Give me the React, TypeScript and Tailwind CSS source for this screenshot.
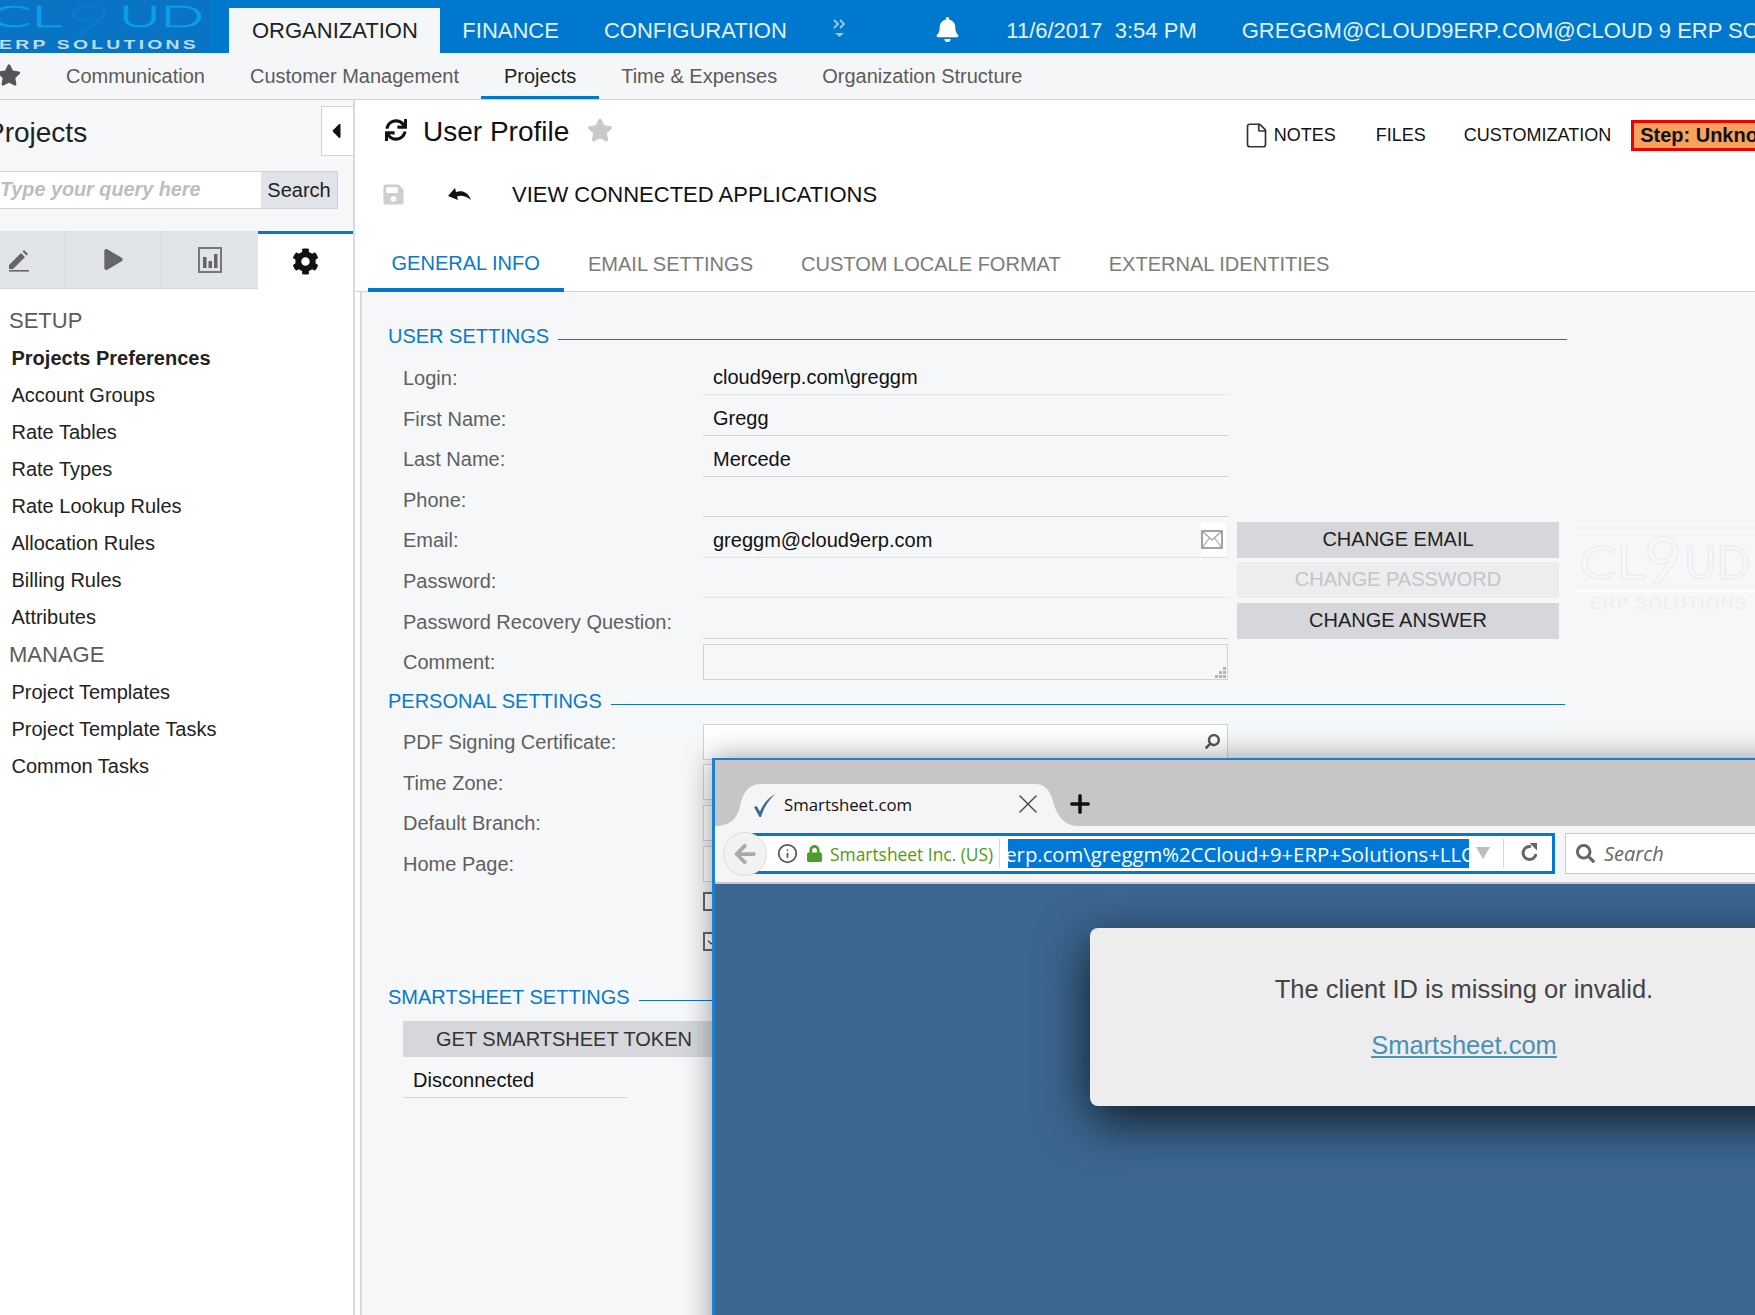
import React from 'react';
import { Check, File, Info, Plus, X } from 'lucide-react';
import { FaArrowLeft, FaBell, FaCaretLeft, FaCog, FaLock, FaPlay, FaSave, FaSearch, FaStar, FaSync } from 'react-icons/fa';

const setupItems = ['Account Groups', 'Rate Tables', 'Rate Types', 'Rate Lookup Rules', 'Allocation Rules', 'Billing Rules', 'Attributes'];
const manageItems = ['Project Templates', 'Project Template Tasks', 'Common Tasks'];

function Logo() {
  return (
    <svg width="229" height="53" className="shrink-0">
      <rect width="210" height="53" fill="#0a74c4" />
      <text x="-10" y="27" fontSize="30" fontWeight="300" fill="#08a0ea" stroke="#08a0ea" strokeWidth="0.6" textLength="72" lengthAdjust="spacingAndGlyphs" fontFamily="Lato">CL</text>
      <text x="66" y="34" fontSize="42" fontWeight="300" fill="#0a7ccf" textLength="46" lengthAdjust="spacingAndGlyphs" fontFamily="Lato">9</text>
      <text x="119" y="27" fontSize="30" fontWeight="300" fill="#08a0ea" stroke="#08a0ea" strokeWidth="0.6" textLength="85" lengthAdjust="spacingAndGlyphs" fontFamily="Lato">UD</text>
      <text x="-1" y="49" fontSize="12" fontWeight="700" letterSpacing="2" fill="#b9dcf2" textLength="200" lengthAdjust="spacingAndGlyphs" fontFamily="Liberation Sans">ERP SOLUTIONS</text>
    </svg>
  );
}

function Watermark() {
  return (
    <svg width="180" height="84" className="absolute left-[1214px] top-[235px]">
      <rect x="0" y="0" width="180" height="2" fill="#f0f2f4" />
      <text x="3" y="52" fontSize="46" fill="none" stroke="#e9ebed" strokeWidth="1" textLength="66" lengthAdjust="spacingAndGlyphs" fontFamily="Lato">CL</text>
      <text x="68" y="56" fontSize="64" fill="none" stroke="#e9ebed" strokeWidth="1" textLength="38" lengthAdjust="spacingAndGlyphs" fontFamily="Lato">9</text>
      <text x="108" y="52" fontSize="46" fill="none" stroke="#e9ebed" strokeWidth="1" textLength="66" lengthAdjust="spacingAndGlyphs" fontFamily="Lato">UD</text>
      <rect x="0" y="63" width="180" height="2" fill="#ffffff" />
      <text x="14" y="82" fontSize="17" fill="#eceef0" textLength="156" lengthAdjust="spacing" fontFamily="Liberation Sans">ERP SOLUTIONS</text>
    </svg>
  );
}

function SectionHead({ title, width, className }: { title: string; width: string; className: string }) {
  return (
    <div className={`flex items-center gap-[9px] h-[24px] ${width} ${className}`}>
      <span className="text-[20px] text-[#0a78cc] whitespace-nowrap">{title}</span>
      <div className="flex-1 h-px bg-[#1272bd] mt-[7px]"></div>
    </div>
  );
}

function Row({ label, field, button }: { label: string; field: React.ReactNode; button?: React.ReactNode }) {
  return (
    <div className="grid grid-cols-[300px_525px_331px] gap-x-0 h-[40.6px] items-center pl-[15px]">
      <span className="pt-[1px] text-[20px] text-[#5f5f5f] whitespace-nowrap">{label}</span>
      {field}
      {button}
    </div>
  );
}

function Line({ value, solid, children }: { value?: string; solid?: boolean; children?: React.ReactNode }) {
  return (
    <div className={`h-[36px] flex items-center justify-between pl-[10px] pr-[2px] text-[20px] text-[#111] border-b ${solid ? 'border-[#d2d3d5]' : 'border-dotted border-[#cfd0d2]'}`}>
      <span className="pt-[1px]">{value}</span>
      {children}
    </div>
  );
}

function FormButton({ label, disabled }: { label: string; disabled?: boolean }) {
  return (
    <div className={`ml-[9px] h-[36px] pb-[2px] flex items-center justify-center text-[20px] ${disabled ? 'bg-[#ecedef] text-[#c4c5c7]' : 'bg-[#d5d7da] text-[#222]'}`}>
      {label}
    </div>
  );
}

function BrowserWindow() {
  return (
    <div className="absolute left-[712px] top-[758px] w-[1100px] h-[600px] flex flex-col border-l-[3px] border-t-2 border-[#1c7fd6] shadow-[0_0_28px_rgba(0,0,0,0.4)] font-['Open_Sans',sans-serif]">
      <div className="h-[66px] bg-[#c6c6c6] flex items-end">
        <div className="relative w-[363px] h-[42px] flex items-center pl-[38px]">
          <svg width="363" height="42" className="absolute left-0 top-0">
            <path d="M0 42 C14 42 22 36 25 22 C28 8 34 0 46 0 L320 0 C330 0 334 6 337 14 C340 26 346 42 363 42 Z" fill="#f5f5f5" />
          </svg>
          <svg width="24" height="24" viewBox="0 0 24 24" className="relative">
            <path d="M1 14 L3.5 13 L7 18.5 C10 11 15 5 22 1 C15 8 10.5 15 8 24 L6.5 24 Z" fill="#3b6a95" />
          </svg>
          <span className="relative ml-[7px] text-[16.8px] text-[#111]">Smartsheet.com</span>
          <X size={32} strokeWidth={1} className="absolute left-[297px] top-[4px] text-[#444]" />
        </div>
        <Plus size={28} strokeWidth={3} className="-ml-[12px] mb-[8px] text-[#111]" />
      </div>
      <div className="relative h-[58px] bg-[#f5f5f5] border-b-2 border-[#c8c8c8] flex items-center pl-[30px] pb-[2px]">
        <div className="w-[810px] h-[41px] shrink-0 bg-white border-y-[3px] border-r-[3px] border-[#0078d7] flex items-center pl-[32px]">
          <Info size={21} strokeWidth={2} className="text-[#555] shrink-0" />
          <FaLock size={17} className="ml-[8px] text-[#4a9f28] shrink-0" />
          <span className="ml-[7px] pt-[2px] text-[17.4px] text-[#4f9a0f] whitespace-nowrap">Smartsheet Inc. (US)</span>
          <div className="ml-[6px] w-px h-[29px] bg-[#d8d8d8] shrink-0"></div>
          <div className="ml-[8px] w-[461px] h-[29px] shrink-0 bg-[#0078d7] overflow-hidden flex items-center">
            <span className="-ml-[3px] pt-[2px] text-[20.3px] text-white whitespace-nowrap">erp.com\greggm%2CCloud+9+ERP+Solutions+LLC</span>
          </div>
          <div className="ml-[7px] w-0 h-0 shrink-0 border-x-[7px] border-x-transparent border-t-[12px] border-t-[#bdbdbd]"></div>
          <div className="ml-[13px] w-px h-[29px] bg-[#d8d8d8] shrink-0"></div>
          <svg width="20" height="20" viewBox="0 0 20 20" className="ml-[16px] shrink-0">
            <path d="M16 11 A6.5 6.5 0 1 1 11 3.6" fill="none" stroke="#666" strokeWidth="3" />
            <path d="M9.5 0 L17 0 L17 7.5 Z" fill="#666" />
          </svg>
        </div>
        <div className="ml-[10px] w-[300px] h-[41px] shrink-0 bg-white border border-[#cccccc] flex items-center pl-[10px]">
          <FaSearch size={19} className="text-[#666]" />
          <span className="ml-[9px] pt-[2px] text-[20px] italic text-[#666]">Search</span>
        </div>
        <div className="absolute left-[8px] top-[6px] w-[44px] h-[44px] rounded-full bg-[#f2f2f2] border border-[#dddddd] flex items-center justify-center">
          <FaArrowLeft size={24} className="text-[#a9a9a9]" />
        </div>
      </div>
      <div className="flex-1 bg-[#3b6690] pl-[375px] pt-[44px]">
        <div className="w-[748px] h-[178px] bg-[#ededed] rounded-[8px] shadow-[0_14px_50px_rgba(0,0,0,0.75)] flex flex-col items-center pt-[46px] font-['Liberation_Sans',sans-serif]">
          <span className="text-[25.5px] leading-[30px] text-[#444]">The client ID is missing or invalid.</span>
          <span className="mt-[25px] text-[25.5px] leading-[32px] text-[#4a90bb] underline">Smartsheet.com</span>
        </div>
      </div>
    </div>
  );
}

export default function App() {
  return (
    <div className="relative w-[1755px] h-[1315px] overflow-hidden flex flex-col bg-white font-['Liberation_Sans',Arial,sans-serif]">
      {/* top bar */}
      <div className="h-[53px] shrink-0 bg-[#0078ce] flex items-center whitespace-pre text-[22px] text-[#e2f1fb]">
        <Logo />
        <div className="self-end h-[45px] shrink-0 pl-[23px] pr-[22px] bg-[#f5f6f8] text-[#222] flex items-center">ORGANIZATION</div>
        <div className="pt-[8px] px-[22.5px] shrink-0">FINANCE</div>
        <div className="pt-[8px] px-[22.5px] shrink-0">CONFIGURATION</div>
        <svg width="16" height="20" viewBox="0 0 16 20" className="ml-[23px] mt-[4px] shrink-0">
          <path d="M2 1 L6 5 L2 9 M8 1 L12 5 L8 9" fill="none" stroke="#9ccbec" strokeWidth="1.8" />
          <path d="M3 14 L12 14 L7.5 18 Z" fill="#9ccbec" />
        </svg>
        <FaBell size={25} className="ml-[87px] mt-[6px] shrink-0 text-white" />
        <span className="ml-[46px] pt-[8px] shrink-0">11/6/2017  3:54 PM</span>
        <span className="ml-[45px] pt-[8px] shrink-0">GREGGM@CLOUD9ERP.COM@CLOUD 9 ERP SOLUTIONS</span>
      </div>

      {/* module nav */}
      <div className="h-[47px] shrink-0 bg-[#f5f6f8] border-b border-[#d2d3d5] flex text-[20px] text-[#5b5b5b] whitespace-nowrap">
        <FaStar size={24} className="-ml-[3px] mt-[10px] mr-[22.5px] shrink-0 text-[#555]" />
        <div className="px-[22.5px] flex items-center">Communication</div>
        <div className="px-[22.5px] flex items-center">Customer Management</div>
        <div className="px-[22.5px] flex items-center border-b-[3px] border-[#0078ce] text-[#222] pt-[3px]">Projects</div>
        <div className="px-[22.5px] flex items-center">Time &amp; Expenses</div>
        <div className="px-[22.5px] flex items-center">Organization Structure</div>
      </div>

      <div className="flex-1 flex min-h-0">
        {/* left panel */}
        <div className="w-[355px] shrink-0 border-r-2 border-[#d8d9db] flex flex-col">
          <div className="h-[131px] bg-[#f5f7f9]">
            <div className="flex items-start justify-between pt-[6px]">
              <span className="-ml-[14px] mt-[10px] text-[28px] leading-[34px] text-[#222]">Projects</span>
              <div className="w-[32px] h-[50px] bg-white border border-r-0 border-[#d2d3d5] flex items-center justify-center pr-[3px]">
                <FaCaretLeft size={24} className="text-[#111]" />
              </div>
            </div>
            <div className="flex w-[338px] h-[38px] mt-[15px] border border-l-0 border-[#d2d3d5]">
              <div className="flex-1 bg-white flex items-center text-[19.8px] font-bold italic text-[#bdbdbd] whitespace-nowrap">Type your query here</div>
              <div className="w-[76px] bg-[#e0e3e7] flex items-center justify-center text-[20px] text-[#222]">Search</div>
            </div>
          </div>
          <div className="h-[59px] flex bg-white">
            <div className="w-[66px] h-[58px] bg-[#e0e3e7] border-r border-b border-[#d4d6d9] flex items-center justify-center">
              <svg width="24" height="24" viewBox="0 0 24 24" className="-ml-[28px]">
                <path d="M2 17 L14 5 L18 9 L6 21 L2 21 Z M15.5 3.5 L17 2 L21 6 L19.5 7.5 Z" fill="#666" />
                <rect x="2" y="22" width="20" height="1.6" fill="#666" />
              </svg>
            </div>
            <div className="w-[96px] h-[58px] bg-[#e0e3e7] border-r border-b border-[#d4d6d9] flex items-center justify-center">
              <FaPlay size={21} className="text-[#666]" />
            </div>
            <div className="w-[96px] h-[58px] bg-[#e0e3e7] border-b border-[#d4d6d9] flex items-center justify-center">
              <svg width="24" height="26" viewBox="0 0 24 26">
                <rect x="1" y="1" width="22" height="24" fill="none" stroke="#777" strokeWidth="2" />
                <rect x="5" y="10" width="3.5" height="11" fill="#666" />
                <rect x="10.5" y="14" width="3.5" height="7" fill="#666" />
                <rect x="16" y="7" width="3.5" height="14" fill="#666" />
              </svg>
            </div>
            <div className="w-[95px] h-[58px] bg-white border-t-[3px] border-[#0078ce] flex items-center justify-center">
              <FaCog size={27} className="text-[#111]" />
            </div>
          </div>
          <div className="pt-[12px] text-[20px] text-[#222] whitespace-nowrap">
            <div className="h-[37px] flex items-center pl-[9px] text-[22px] text-[#5b5b5b]">SETUP</div>
            <div className="h-[37px] flex items-center pl-[11.5px] font-bold">Projects Preferences</div>
            {setupItems.map((item) => (
              <div key={item} className="h-[37px] flex items-center pl-[11.5px]">{item}</div>
            ))}
            <div className="h-[37px] mt-[1px] flex items-center pl-[9px] text-[22px] text-[#5b5b5b]">MANAGE</div>
            {manageItems.map((item) => (
              <div key={item} className="h-[37px] flex items-center pl-[11.5px]">{item}</div>
            ))}
          </div>
        </div>

        {/* main */}
        <div className="flex-1 flex flex-col min-w-0">
          <div className="h-[62px] shrink-0 flex items-center whitespace-nowrap">
            <FaSync size={22} className="ml-[30px] -mt-[2px] text-[#111] shrink-0" />
            <span className="ml-[16px] mt-[2px] text-[28px] text-[#111]">User Profile</span>
            <FaStar size={26} className="ml-[18px] -mt-[3px] text-[#c9c9c9] shrink-0" />
            <div className="ml-[630px] mt-[8px] flex items-center text-[18px] text-[#111] shrink-0">
              <File size={27} strokeWidth={1.5} className="text-[#333]" />
              <span className="ml-[3.5px]">NOTES</span>
              <span className="ml-[40px]">FILES</span>
              <span className="ml-[38px]">CUSTOMIZATION</span>
              <div className="ml-[20px] w-[300px] h-[31px] shrink-0 bg-[#f6a25e] border-[3px] border-[#ee0000] flex items-center pl-[6px] text-[20px] font-bold">Step: Unknown</div>
            </div>
          </div>
          <div className="h-[64px] shrink-0 flex items-center">
            <FaSave size={23} className="ml-[27px] text-[#cdcfd2] shrink-0" />
            <svg width="23" height="14" viewBox="0 0 23 14" className="ml-[43px] shrink-0">
              <path d="M0 9 L7 1 L8 5 C14 3 20 5 23 13 C18 9 13 8 9 9.5 L10 13 Z" fill="#111" />
            </svg>
            <span className="ml-[41px] text-[22px] text-[#111] whitespace-nowrap">VIEW CONNECTED APPLICATIONS</span>
          </div>
          <div className="h-[66px] shrink-0 flex items-end border-b border-[#d2d3d5] pl-[12.5px] text-[20.05px] text-[#7b7b7b] whitespace-nowrap">
            <div className="h-[54px] px-6 flex items-center border-b-4 border-[#0078ce] text-[#0a78cc] relative top-px">GENERAL INFO</div>
            <div className="h-[54px] px-6 flex items-center">EMAIL SETTINGS</div>
            <div className="h-[54px] px-6 flex items-center">CUSTOM LOCALE FORMAT</div>
            <div className="h-[54px] px-6 flex items-center">EXTERNAL IDENTITIES</div>
          </div>
          <div className="flex-1 ml-[5px] border-l-2 border-[#d8d9db] bg-[#f5f7f9] pl-[26px] relative">
            <Watermark />
            <SectionHead title="USER SETTINGS" width="w-[1179px]" className="mt-[32px] mb-[9.2px]" />
            <Row label="Login:" field={<Line value="cloud9erp.com\greggm" />} />
            <Row label="First Name:" field={<Line value="Gregg" solid />} />
            <Row label="Last Name:" field={<Line value="Mercede" solid />} />
            <Row label="Phone:" field={<Line solid />} />
            <Row
              label="Email:"
              field={
                <Line value="greggm@cloud9erp.com">
                  <div className="w-[25px] h-[33px] bg-white flex items-center">
                    <svg width="22" height="19" viewBox="0 0 22 19">
                      <rect x="1" y="1" width="20" height="17" fill="none" stroke="#8c8c8c" strokeWidth="1.6" />
                      <path d="M1 1 L11 10 L21 1 M1 18 L8.5 8 M21 18 L13.5 8" fill="none" stroke="#a0a0a0" strokeWidth="1.1" />
                    </svg>
                  </div>
                </Line>
              }
              button={<FormButton label="CHANGE EMAIL" />}
            />
            <Row label="Password:" field={<Line />} button={<FormButton label="CHANGE PASSWORD" disabled />} />
            <Row label="Password Recovery Question:" field={<Line solid />} button={<FormButton label="CHANGE ANSWER" />} />
            <Row
              label="Comment:"
              field={
                <div className="h-[36px] border border-[#d2d3d5] relative">
                  <svg width="11" height="11" viewBox="0 0 11 11" className="absolute right-[1px] bottom-[1px]">
                    <path d="M8 0h3v3H8z M4 4h3v3H4z M8 4h3v3H8z M0 8h3v3H0z M4 8h3v3H4z M8 8h3v3H8z" fill="#b5b5b5" />
                  </svg>
                </div>
              }
            />
            <SectionHead title="PERSONAL SETTINGS" width="w-[1177px]" className="mt-[7px] mb-[8.5px]" />
            <Row
              label="PDF Signing Certificate:"
              field={
                <div className="h-[36px] bg-white border border-[#d2d3d5] flex items-center justify-end pr-[7px]">
                  <FaSearch size={15} className="text-[#555] scale-x-[-1]" />
                </div>
              }
            />
            <Row label="Time Zone:" field={<div className="h-[36px] bg-white border border-[#d2d3d5]"></div>} />
            <Row label="Default Branch:" field={<div className="h-[36px] bg-white border border-[#d2d3d5]"></div>} />
            <Row label="Home Page:" field={<div className="h-[36px] bg-white border border-[#d2d3d5]"></div>} />
            <div className="pl-[315px] pt-[8px]">
              <div className="w-[19px] h-[19px] border-2 border-[#666] bg-white"></div>
              <div className="w-[19px] h-[19px] mt-[21px] border-2 border-[#666] bg-white flex items-center justify-center">
                <Check size={14} strokeWidth={2} className="text-[#444]" />
              </div>
            </div>
            <SectionHead title="SMARTSHEET SETTINGS" width="w-[1179px]" className="mt-[34px]" />
            <div className="ml-[15px] mt-[12px] w-[400px] h-[36px] bg-[#d5d7da] flex items-center pl-[33px] text-[20px] text-[#333] whitespace-nowrap">GET SMARTSHEET TOKEN</div>
            <div className="ml-[15px] mt-[5px] w-[224px] h-[36px] pt-[1px] border-b border-[#d2d3d5] flex items-center pl-[10px] text-[20px] text-[#111]">Disconnected</div>
          </div>
        </div>
      </div>

      <BrowserWindow />
    </div>
  );
}
